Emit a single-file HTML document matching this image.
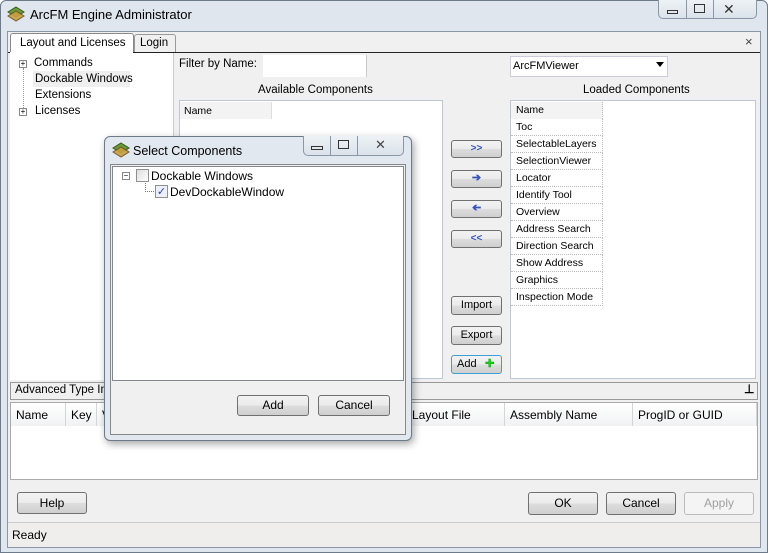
<!DOCTYPE html>
<html><head><meta charset="utf-8"><style>
*{box-sizing:border-box;margin:0;padding:0}
body{width:768px;height:553px;overflow:hidden;font-family:"Liberation Sans",Arial,sans-serif;font-size:11px;color:#000;background:#fff;position:relative}
.a{position:absolute}
.btn{position:absolute;border:1px solid #707070;border-radius:3px;background:linear-gradient(#f2f2f2 0%,#ebebeb 50%,#dddddd 51%,#cfcfcf 100%);text-align:center;font-size:11px}
.w{background:#fff}
.row{position:absolute;left:0;width:92px;height:17px;border-bottom:1px dotted #bbb;border-right:1px dotted #bbb;padding:2px 0 0 5px;font-size:10.5px}
.hd{position:absolute;top:0;height:23px;border-right:1px solid #d5d5d5;background:linear-gradient(#fff,#f1f2f4);padding:5px 0 0 5px;font-size:12px}
</style></head><body>
<!-- outer frame -->
<div class="a" style="left:0;top:0;width:768px;height:553px;background:#dfe6ee;border:1px solid #6d7a8a;border-radius:6px 6px 0 0"></div>
<!-- app icon -->
<svg class="a" style="left:7px;top:6px" width="18" height="16"><polygon points="9,1 17,6 9,11 1,6" fill="#6a9a3a" stroke="#3a5a20"/><polygon points="9,5 17,10 9,15 1,10" fill="#c9a040" stroke="#6a5020" opacity=".9"/></svg>
<div class="a" style="left:30px;top:7px;font-size:13px;color:#000">ArcFM Engine Administrator</div>
<!-- caption buttons -->
<div class="a" style="left:658px;top:0;width:99px;height:19px;border:1px solid #8a97a8;border-top:none;border-radius:0 0 5px 5px;background:linear-gradient(#eef2f6,#dbe2ea)"></div>
<div class="a" style="left:686px;top:0;width:1px;height:19px;background:#8a97a8"></div>
<div class="a" style="left:713px;top:0;width:1px;height:19px;background:#8a97a8"></div>
<div class="a" style="left:667px;top:10px;width:11px;height:4px;border:1px solid #333"></div>
<div class="a" style="left:694px;top:4px;width:11px;height:9px;border:1px solid #333"></div>
<div class="a" style="left:723px;top:1px;font-size:14px;color:#333">✕</div>
<!-- inner client -->
<div class="a" style="left:7px;top:31px;width:754px;height:517px;background:#f0f0f0;border:1px solid #8a97a8"></div>
<!-- tabs -->
<div class="a" style="left:10px;top:33px;width:124px;height:20px;background:#fff;border:1px solid #888;border-bottom:none;border-radius:3px 3px 0 0"></div>
<div class="a" style="left:20px;top:37px;font-size:11.5px">Layout and Licenses</div>
<div class="a" style="left:134px;top:34px;width:42px;height:18px;background:#f0f0f0;border:1px solid #999;border-bottom:none;border-radius:3px 3px 0 0"></div>
<div class="a" style="left:140px;top:37px;font-size:11.5px">Login</div>
<div class="a" style="left:8px;top:52px;width:752px;height:1px;background:#222"></div>
<div class="a" style="left:10px;top:52px;width:123px;height:1px;background:#fff"></div>
<div class="a" style="left:745px;top:34px;font-size:13px;color:#444">×</div>
<!-- left tree -->
<div class="a w" style="left:10px;top:53px;width:164px;height:327px;border-right:1px solid #ccc"></div>
<div class="a" style="left:19px;top:60px;width:8px;height:8px;border:1px solid #888;font-size:8px;line-height:6px;text-align:center">+</div>
<div class="a" style="left:19px;top:108px;width:8px;height:8px;border:1px solid #888;font-size:8px;line-height:6px;text-align:center">+</div>
<div class="a" style="left:23px;top:68px;height:40px;border-left:1px dotted #999"></div>
<div class="a" style="left:34px;top:57px;font-size:11.5px">Commands</div>
<div class="a" style="left:33px;top:71px;width:97px;height:16px;background:#efefef"></div>
<div class="a" style="left:35px;top:73px;font-size:11.5px">Dockable Windows</div>
<div class="a" style="left:35px;top:89px;font-size:11.5px">Extensions</div>
<div class="a" style="left:35px;top:105px;font-size:11.5px">Licenses</div>
<!-- filter -->
<div class="a" style="left:179px;top:58px;font-size:11.5px">Filter by Name:</div>
<div class="a w" style="left:263px;top:55px;width:104px;height:22px;border-right:1px solid #ccc"></div>
<div class="a w" style="left:510px;top:56px;width:158px;height:21px;border:1px solid #ccd"></div>
<div class="a" style="left:513px;top:60px;font-size:11px">ArcFMViewer</div>
<div class="a" style="left:656px;top:62px;width:0;height:0;border-left:4px solid transparent;border-right:4px solid transparent;border-top:5px solid #000"></div>
<div class="a" style="left:258px;top:84px;font-size:11.5px">Available Components</div>
<div class="a" style="left:583px;top:84px;font-size:11.5px">Loaded Components</div>
<!-- lists -->
<div class="a w" style="left:179px;top:100px;width:264px;height:279px;border:1px solid #bcc8d6"></div>
<div class="a" style="left:180px;top:102px;width:92px;height:17px;background:#f3f3f3;border-right:1px solid #ddd;padding:3px 0 0 4px;font-size:10.5px">Name</div>
<div class="a w" style="left:510px;top:100px;width:246px;height:279px;border:1px solid #bcc8d6"></div>
<div style="position:absolute;left:511px;top:102px;width:93px;height:220px">
<div class="row" style="top:0;background:#f3f3f3;border-bottom:none">Name</div>
<div class="row" style="top:17px">Toc</div>
<div class="row" style="top:34px">SelectableLayers</div>
<div class="row" style="top:51px">SelectionViewer</div>
<div class="row" style="top:68px">Locator</div>
<div class="row" style="top:85px">Identify Tool</div>
<div class="row" style="top:102px">Overview</div>
<div class="row" style="top:119px">Address Search</div>
<div class="row" style="top:136px">Direction Search</div>
<div class="row" style="top:153px">Show Address</div>
<div class="row" style="top:170px">Graphics</div>
<div class="row" style="top:187px">Inspection Mode</div>
</div>
<!-- middle buttons -->
<div class="btn" style="left:451px;top:140px;width:51px;height:18px;color:#3553b8;font-weight:bold;font-size:10px;line-height:15px">&gt;&gt;</div>
<div class="btn" style="left:451px;top:170px;width:51px;height:18px;color:#3553b8;font-weight:bold;line-height:15px">➔</div>
<div class="btn" style="left:451px;top:200px;width:51px;height:18px;color:#3553b8;font-weight:bold;line-height:15px"><span style="display:inline-block;transform:scaleX(-1)">➔</span></div>
<div class="btn" style="left:451px;top:230px;width:51px;height:18px;color:#3553b8;font-weight:bold;font-size:10px;line-height:15px">&lt;&lt;</div>
<div class="btn" style="left:451px;top:296px;width:51px;height:19px;line-height:17px">Import</div>
<div class="btn" style="left:451px;top:326px;width:51px;height:19px;line-height:17px">Export</div>
<div class="btn" style="left:451px;top:355px;width:51px;height:19px;line-height:17px;border-color:#3c9fd6;text-align:left;padding-left:5px">Add</div>
<div class="a" style="left:485px;top:357px;font-size:16px;font-weight:bold;color:#1fd11f;line-height:14px;-webkit-text-stroke:0.5px #0a0">+</div>
<!-- advanced bar -->
<div class="a" style="left:10px;top:382px;width:748px;height:18px;border:1px solid #999;background:#f0f0f0"></div>
<div class="a" style="left:15px;top:384px;font-size:11.5px">Advanced Type Info</div>
<div class="a" style="left:744px;top:382px;font-size:12px;font-weight:bold">⊥</div>
<!-- grid -->
<div class="a w" style="left:10px;top:402px;width:748px;height:78px;border:1px solid #aaa"></div>
<div style="position:absolute;left:11px;top:403px;width:746px;height:23px">
<div class="hd" style="left:0;width:55px">Name</div>
<div class="hd" style="left:55px;width:31px">Key</div>
<div class="hd" style="left:86px;width:100px">V</div>
<div class="hd" style="left:396px;width:98px">Layout File</div>
<div class="hd" style="left:494px;width:128px">Assembly Name</div>
<div class="hd" style="left:622px;width:124px">ProgID or GUID</div>
</div>
<!-- bottom buttons -->
<div class="btn" style="left:17px;top:492px;width:70px;height:22px;line-height:20px;font-size:12px">Help</div>
<div class="btn" style="left:528px;top:492px;width:70px;height:23px;line-height:21px;font-size:12px">OK</div>
<div class="btn" style="left:606px;top:492px;width:70px;height:23px;line-height:21px;font-size:12px">Cancel</div>
<div class="btn" style="left:684px;top:492px;width:70px;height:23px;line-height:21px;font-size:12px;color:#a0a0a0;border-color:#bbb;background:#f4f4f4">Apply</div>
<!-- status -->
<div class="a" style="left:8px;top:522px;width:752px;height:25px;background:#f0eeec;border-top:1px solid #ccc"></div>
<div class="a" style="left:12px;top:528px;font-size:12px">Ready</div>
<!-- dialog -->
<div class="a" style="left:104px;top:136px;width:308px;height:305px;background:#e2e8ef;border:1px solid #6d7a8a;border-radius:6px;box-shadow:2px 3px 8px rgba(0,0,0,.35)"></div>
<svg class="a" style="left:112px;top:142px" width="18" height="16"><polygon points="9,1 17,6 9,11 1,6" fill="#6a9a3a" stroke="#3a5a20"/><polygon points="9,5 17,10 9,15 1,10" fill="#c9a040" stroke="#6a5020" opacity=".9"/></svg>
<div class="a" style="left:133px;top:144px;font-size:12.5px">Select Components</div>
<div class="a" style="left:303px;top:136px;width:101px;height:20px;border:1px solid #8a97a8;border-top:none;border-radius:0 0 5px 5px;background:linear-gradient(#eef2f6,#dbe2ea)"></div>
<div class="a" style="left:330px;top:136px;width:1px;height:20px;background:#8a97a8"></div>
<div class="a" style="left:357px;top:136px;width:1px;height:20px;background:#8a97a8"></div>
<div class="a" style="left:311px;top:146px;width:12px;height:4px;border:1px solid #333"></div>
<div class="a" style="left:338px;top:140px;width:11px;height:9px;border:1px solid #333"></div>
<div class="a" style="left:375px;top:137px;font-size:13px;color:#444">✕</div>
<div class="a" style="left:110px;top:164px;width:296px;height:271px;background:#f0f0f0;border:1px solid #888"></div>
<div class="a w" style="left:112px;top:166px;width:292px;height:215px;border:1px solid #828790"></div>
<div class="a" style="left:122px;top:172px;width:8px;height:8px;border:1px solid #888;font-size:8px;line-height:5px;text-align:center">−</div>
<div class="a" style="left:136px;top:169px;width:13px;height:13px;border:1px solid #8f8f8f;background:linear-gradient(135deg,#ddd,#fff)"></div>
<div class="a" style="left:151px;top:169px;font-size:12px">Dockable Windows</div>
<div class="a" style="left:145px;top:183px;width:9px;height:9px;border-left:1px dotted #777;border-bottom:1px dotted #777"></div>
<div class="a" style="left:155px;top:185px;width:13px;height:13px;border:1px solid #8f8f8f;background:#eef;color:#2a4aa0;font-size:11px;line-height:12px;text-align:center">✓</div>
<div class="a" style="left:170px;top:185px;font-size:12px">DevDockableWindow</div>
<div class="btn" style="left:237px;top:395px;width:72px;height:21px;line-height:19px;font-size:12px">Add</div>
<div class="btn" style="left:318px;top:395px;width:72px;height:21px;line-height:19px;font-size:12px">Cancel</div>
</body></html>
